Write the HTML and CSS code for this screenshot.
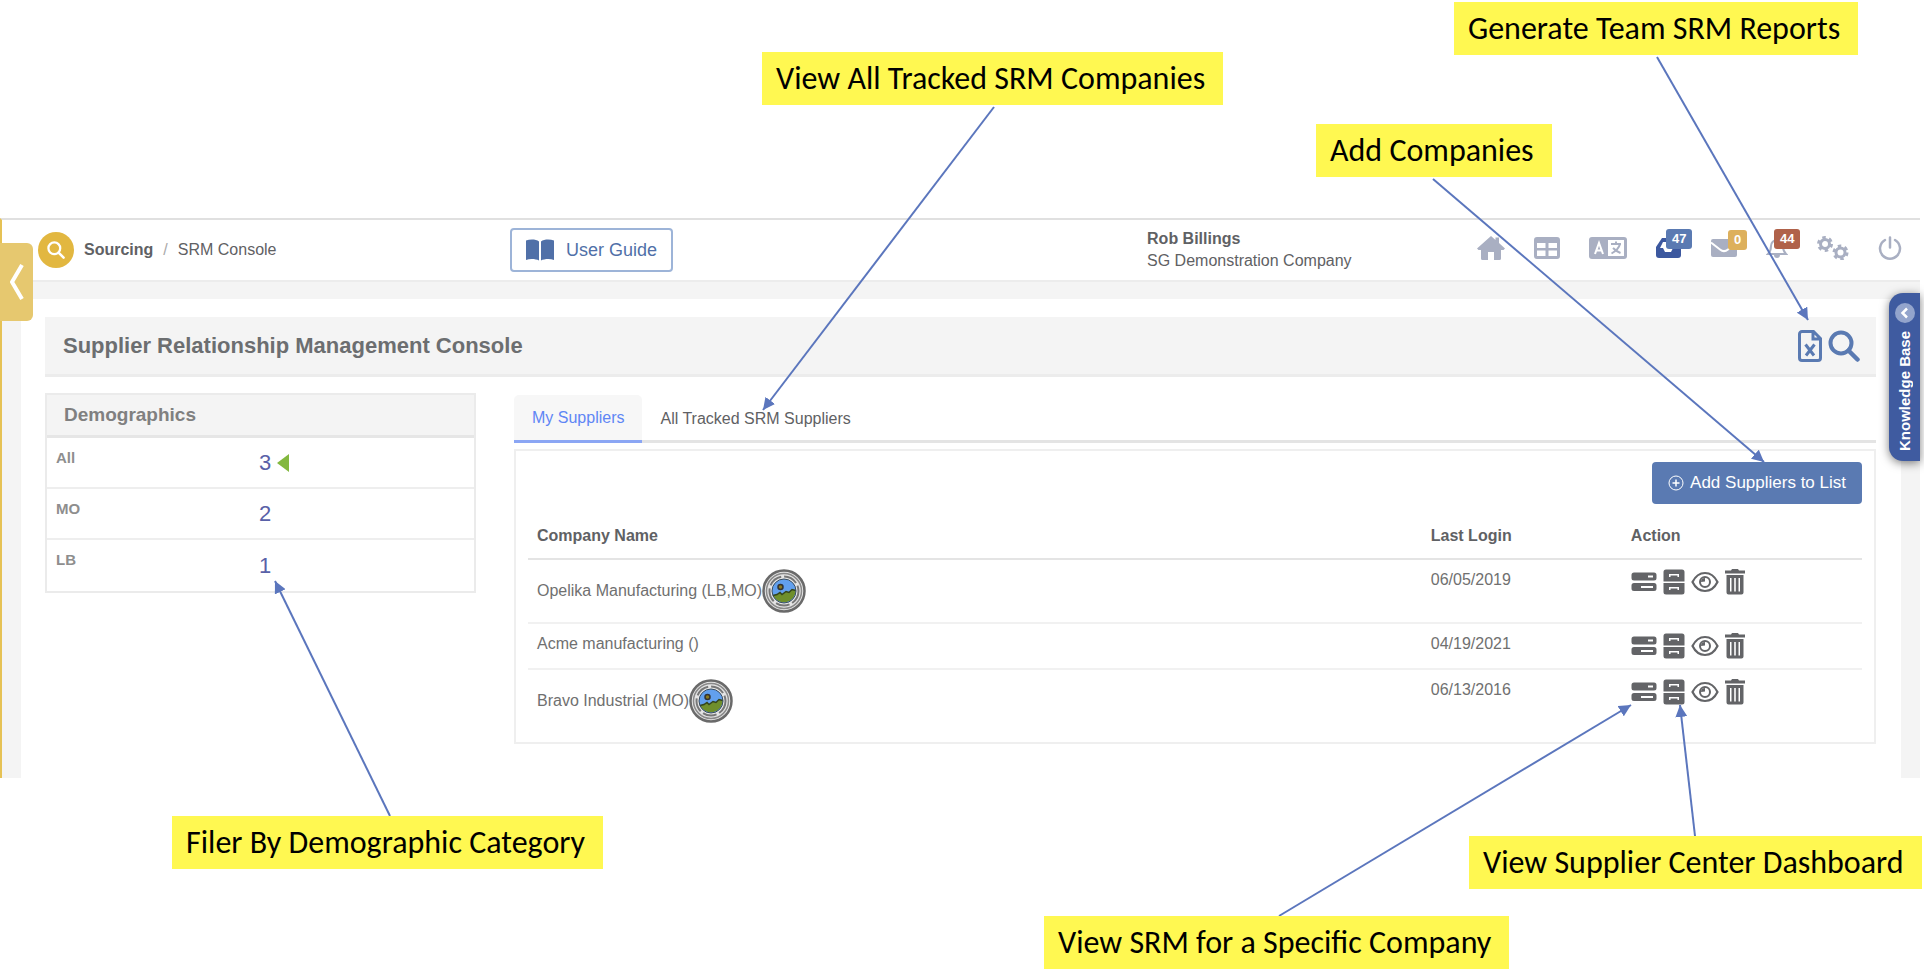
FILE: index.html
```
<!DOCTYPE html>
<html lang="en">
<head>
    <meta charset="UTF-8">
    <meta name="viewport" content="width=device-width, initial-scale=1.0">
    <title>SRM Console</title>
    <link rel="stylesheet" href="styles.css">
</head>
<body>
    <!-- Shared icons -->
    <svg class="sprite" aria-hidden="true">
        <symbol id="i-search" viewBox="0 0 32 32">
            <circle cx="13" cy="13" r="10.5" fill="none" stroke="currentColor" stroke-width="4"/>
            <path d="M20.5 20.5l9 9" fill="none" stroke="currentColor" stroke-width="4.5" stroke-linecap="round"/>
        </symbol>
        <symbol id="i-server" viewBox="0 0 26 20">
            <path fill="currentColor" fill-rule="evenodd" d="M3 .5h20a2.500 2.500 0 0 1 2.500 2.500v3a2.500 2.500 0 0 1-2.500 2.500H3A2.500 2.500 0 0 1 .5 6V3A2.500 2.500 0 0 1 3 .5zm14 3v2h5v-2zM3 11h20a2.500 2.500 0 0 1 2.500 2.500v3a2.500 2.500 0 0 1-2.500 2.500H3A2.500 2.500 0 0 1 .5 16.500v-3A2.500 2.500 0 0 1 3 11zm7 3v2h12v-2z"/>
        </symbol>
        <symbol id="i-drawer" viewBox="0 0 22 26">
            <path fill="currentColor" fill-rule="evenodd" d="M3 .5h16A2.500 2.500 0 0 1 21.500 3v9.500H.5V3A2.500 2.500 0 0 1 3 .5zM6 8h1.500V6.500h7V8H16V5H6zM.5 14h21v9a2.500 2.500 0 0 1-2.500 2.500H3A2.500 2.500 0 0 1 .5 23zM6 21h1.500v-1.500h7V21H16v-3H6z"/>
        </symbol>
        <symbol id="i-eye" viewBox="0 0 28 22">
            <path d="M1.500 11C4.500 5 9 2 14 2s9.500 3 12.500 9C23.500 17 19 20 14 20S4.500 17 1.500 11z" fill="none" stroke="currentColor" stroke-width="2.200"/>
            <circle cx="14" cy="11" r="5" fill="none" stroke="currentColor" stroke-width="2"/>
            <path d="M10 11a4 4 0 0 1 4-4v3.500z" fill="currentColor"/>
        </symbol>
        <symbol id="i-trash" viewBox="0 0 20 26">
            <path fill="currentColor" fill-rule="evenodd" d="M7 0h6l1 1.500h6v3H0v-3h6zM1.500 6h17v17.500A2 2 0 0 1 16.500 25.500h-13a2 2 0 0 1-2-2zM5 9v13.500h1.500V9zm4.200 0v13.500h1.600V9zm4.300 0v13.500H15V9z"/>
        </symbol>
        <symbol id="i-seal" viewBox="0 0 44 44">
            <circle cx="22" cy="22" r="20.500" fill="#e4e4e4" stroke="#6a6a6a" stroke-width="2.500"/>
            <circle cx="22" cy="22" r="17.500" fill="none" stroke="#8a8a8a" stroke-width="1.500"/>
            <circle cx="22" cy="22" r="14.500" fill="none" stroke="#777" stroke-width="2" stroke-dasharray="14 3"/>
            <circle cx="22" cy="22" r="12" fill="#62a0ee"/>
            <path d="M11 26.500l4-1 3-2 2 2 4-3 3 1 3-3 3.800 1A12 12 0 0 1 11 26.500z" fill="#6f8f2c"/>
            <path d="M11 26.500l4-1 3-2 2 2 4-3 3 1 3-3 3.800 1" fill="none" stroke="#35451c" stroke-width="1.500"/>
            <circle cx="22" cy="22" r="12" fill="none" stroke="#3c4e5e" stroke-width="1"/>
            <circle cx="18.500" cy="18" r="2.500" fill="#8a7a20" stroke="#333" stroke-width="1.500"/>
        </symbol>
    </svg>

    <div class="app">
        <header class="topbar">
            <button class="search-btn" aria-label="Search"><svg width="18" height="18"><use href="#i-search"/></svg></button>
            <nav class="breadcrumb">
                <a href="#" class="current">Sourcing</a>
                <span class="slash">/</span>
                <a href="#">SRM Console</a>
            </nav>
            <a href="#" class="guide-btn">
                <svg width="28" height="22" viewBox="0 0 28 22" fill="currentColor"><path d="M13 2.500C10 0 4 0 0 1.500V21c4-1.500 10-1 13 .5zM15 2.500C18 0 24 0 28 1.500V21c-4-1.500-10-1-13 .5z"/></svg>
                User Guide
            </a>
            <div class="user">
                <strong>Rob Billings</strong>
                <span>SG Demonstration Company</span>
            </div>
            <div class="toolbar">
                <button aria-label="Home"><svg width="28" height="24" viewBox="0 0 28 24" fill="currentColor"><path d="M14 0l4.500 4V1.500h3.500V7l6 5.500-1.500 1.500H24v8.500a1.500 1.500 0 0 1-1.500 1.500H17v-8h-6v8H5.500A1.500 1.500 0 0 1 4 22.500V14H1.500L0 12.500z"/></svg></button>
                <button aria-label="Tables"><svg width="26" height="22" viewBox="0 0 26 22" fill="currentColor" fill-rule="evenodd"><path d="M3 0h20a3 3 0 0 1 3 3v16a3 3 0 0 1-3 3H3a3 3 0 0 1-3-3V3a3 3 0 0 1 3-3zm0 6v5h8.500V6zm11.500 0v5H23V6zM3 13.500V19h8.500v-5.500zm11.500 0V19H23v-5.500z"/></svg></button>
                <button aria-label="Language"><svg width="38" height="22" viewBox="0 0 38 22"><rect width="38" height="22" rx="3" fill="currentColor"/><rect x="19" y="3" width="16" height="16" fill="#fff"/><path d="M6 17l4-11 4 11M7.500 13.500h5" fill="none" stroke="#fff" stroke-width="2"/><path d="M22 7h10M27 4.500V7M31 7c-1 4-4 7-8.500 9.500M24 11c2 2 5 4 7.500 5" fill="none" stroke="currentColor" stroke-width="2"/></svg></button>
                <button class="active" aria-label="Inbox"><svg width="26" height="20" viewBox="0 0 26 20"><path d="M6 0h14l5 9v8a3 3 0 0 1-3 3H3a3 3 0 0 1-3-3V9z" fill="currentColor"/><path d="M4 10l3-6h12l3 6h-5l-2 4H9l-2-4z" fill="#fff"/></svg><span class="badge">47</span></button>
                <button aria-label="Messages"><svg width="26" height="18" viewBox="0 0 26 18"><rect width="26" height="18" rx="2" fill="currentColor"/><path d="M0 3.500l9 7c2.500 2 5.500 2 8 0l9-7" fill="none" stroke="#fff" stroke-width="2"/></svg><span class="badge yellow">0</span></button>
                <button aria-label="Alerts"><svg width="22" height="20" viewBox="0 0 22 20"><path d="M2 16c2-2 3-3.500 3-8a6 6 0 0 1 12 0c0 4.500 1 6 3 8z" fill="none" stroke="currentColor" stroke-width="2"/><path d="M8 17h6a3 3 0 0 1-6 0z" fill="currentColor"/></svg><span class="badge red">44</span></button>
                <button aria-label="Settings"><svg width="32" height="24" viewBox="0 0 32 24" fill="none" stroke="currentColor"><circle cx="8" cy="8" r="4.500" stroke-width="3"/><circle cx="8" cy="8" r="6.500" stroke-width="3" stroke-dasharray="3.400 3.400"/><circle cx="23.500" cy="16.500" r="4.500" stroke-width="3"/><circle cx="23.500" cy="16.500" r="6.500" stroke-width="3" stroke-dasharray="3.400 3.400"/></svg></button>
                <button aria-label="Log out"><svg width="24" height="24" viewBox="0 0 24 24" fill="none" stroke="currentColor" stroke-width="2.500" stroke-linecap="round"><path d="M12 1.500v10M7 4a10 10 0 1 0 10 0"/></svg></button>
            </div>
        </header>

        <button class="side-toggle" aria-label="Open menu"><svg width="14" height="36" viewBox="0 0 14 36"><path d="M12 1L2 18l10 17" fill="none" stroke="#fff" stroke-width="4"/></svg></button>

        <main class="content">
            <div class="title-bar">
                <h1>Supplier Relationship Management Console</h1>
                <div class="title-actions">
                    <button aria-label="Export to Excel"><svg width="24" height="32" viewBox="0 0 24 32"><path d="M4 1.500h11.500l7 7V28a2.500 2.500 0 0 1-2.500 2.500H4A2.500 2.500 0 0 1 1.500 28V4A2.500 2.500 0 0 1 4 1.500zM15 2v7h7" fill="none" stroke="currentColor" stroke-width="3"/><path d="M7.500 14.500l8.500 11M16.500 14.500l-8.500 11" stroke="currentColor" stroke-width="3"/></svg></button>
                    <button aria-label="Search suppliers"><svg width="32" height="32"><use href="#i-search"/></svg></button>
                </div>
            </div>

            <div class="columns">
                <section class="demographics">
                    <h2>Demographics</h2>
                    <div class="demo-row"><span>All</span><a href="#">3 <svg width="12" height="18" viewBox="0 0 12 18"><path d="M12 0v18L0 9z" fill="#83b83f"/></svg></a></div>
                    <div class="demo-row"><span>MO</span><a href="#">2</a></div>
                    <div class="demo-row"><span>LB</span><a href="#">1</a></div>
                </section>

                <section class="suppliers">
                    <div class="tabs">
                        <button class="tab active">My Suppliers</button>
                        <button class="tab">All Tracked SRM Suppliers</button>
                    </div>
                    <div class="panel">
                        <button class="add-btn">
                            <svg width="16" height="16" viewBox="0 0 16 16" fill="none" stroke="currentColor"><circle cx="8" cy="8" r="7"/><path d="M8 4.500v7M4.500 8h7" stroke-width="1.500"/></svg>
                            Add Suppliers to List
                        </button>
                        <table>
                            <thead>
                                <tr><th class="col-name">Company Name</th><th class="col-date">Last Login</th><th>Action</th></tr>
                            </thead>
                            <tbody>
                                <tr>
                                    <td><div class="company">Opelika Manufacturing (LB,MO) <svg width="44" height="44"><use href="#i-seal"/></svg></div></td>
                                    <td>06/05/2019</td>
                                    <td><div class="actions">
                                        <button aria-label="View SRM"><svg width="26" height="20"><use href="#i-server"/></svg></button>
                                        <button aria-label="Dashboard"><svg width="22" height="26"><use href="#i-drawer"/></svg></button>
                                        <button aria-label="View"><svg width="28" height="22"><use href="#i-eye"/></svg></button>
                                        <button aria-label="Delete"><svg width="20" height="26"><use href="#i-trash"/></svg></button>
                                    </div></td>
                                </tr>
                                <tr>
                                    <td>Acme manufacturing ()</td>
                                    <td>04/19/2021</td>
                                    <td><div class="actions">
                                        <button aria-label="View SRM"><svg width="26" height="20"><use href="#i-server"/></svg></button>
                                        <button aria-label="Dashboard"><svg width="22" height="26"><use href="#i-drawer"/></svg></button>
                                        <button aria-label="View"><svg width="28" height="22"><use href="#i-eye"/></svg></button>
                                        <button aria-label="Delete"><svg width="20" height="26"><use href="#i-trash"/></svg></button>
                                    </div></td>
                                </tr>
                                <tr>
                                    <td><div class="company">Bravo Industrial (MO) <svg width="44" height="44"><use href="#i-seal"/></svg></div></td>
                                    <td>06/13/2016</td>
                                    <td><div class="actions">
                                        <button aria-label="View SRM"><svg width="26" height="20"><use href="#i-server"/></svg></button>
                                        <button aria-label="Dashboard"><svg width="22" height="26"><use href="#i-drawer"/></svg></button>
                                        <button aria-label="View"><svg width="28" height="22"><use href="#i-eye"/></svg></button>
                                        <button aria-label="Delete"><svg width="20" height="26"><use href="#i-trash"/></svg></button>
                                    </div></td>
                                </tr>
                            </tbody>
                        </table>
                    </div>
                </section>
            </div>
        </main>

        <button class="knowledge">
            <span>Knowledge Base</span>
            <svg width="20" height="20" viewBox="0 0 20 20"><circle cx="10" cy="10" r="10" fill="#93a4cc"/><path d="M12 5.500L7.500 10l4.500 4.500" fill="none" stroke="#fff" stroke-width="2.500"/></svg>
        </button>
    </div>

    <!-- Callouts over the console -->
    <svg class="arrows" viewBox="0 0 1924 980" aria-hidden="true">
        <defs>
            <marker id="head" markerUnits="userSpaceOnUse" markerWidth="12" markerHeight="12" refX="12" refY="6" orient="auto"><path d="M0 0l12 6-12 6z" fill="#5b76bd"/></marker>
        </defs>
        <g stroke="#5b76bd" stroke-width="2" marker-end="url(#head)">
            <line x1="994" y1="107" x2="763" y2="410"/>
            <line x1="1657" y1="57" x2="1808" y2="320"/>
            <line x1="1433" y1="179" x2="1764" y2="462"/>
            <line x1="390" y1="816" x2="275" y2="581"/>
            <line x1="1279" y1="916" x2="1631" y2="705"/>
            <line x1="1695" y1="836" x2="1680" y2="705"/>
        </g>
    </svg>
    <div class="callout c-tracked">View All Tracked SRM Companies</div>
    <div class="callout c-reports">Generate Team SRM Reports</div>
    <div class="callout c-add">Add Companies</div>
    <div class="callout c-filter">Filer By Demographic Category</div>
    <div class="callout c-dashboard">View Supplier Center Dashboard</div>
    <div class="callout c-specific">View SRM for a Specific Company</div>
</body>
</html>
```
FILE: styles.css
```
:root {
    --blue: #5a7ab2;
    --gold: #e2b740;
    --text: #5f6164;
    --gray: #f4f4f4;
    --line: #e4e4e4;
}
* {
    box-sizing: border-box;
}
body {
    margin: 0;
    padding: 218px 4px 0 0;
    position: relative;
    min-height: 980px;
    background: #fff;
    color: var(--text);
    font-family: "Liberation Sans", Arial, sans-serif;
    font-size: 16px;
    line-height: 22px;
}
a {
    color: inherit;
    text-decoration: none;
}
button {
    font: inherit;
    color: inherit;
    background: none;
    border: none;
    padding: 0;
    cursor: pointer;
}
svg {
    display: block;
    flex: none;
}
.sprite {
    position: absolute;
    width: 0;
    height: 0;
}
.app {
    position: relative;
    background: var(--gray);
    border-top: 2px solid #e0e0e0;
    border-left: 2px solid #e6c255;
}

/* Top bar */
.topbar {
    display: flex;
    align-items: center;
    height: 62px;
    padding: 0 18px 0 36px;
    background: #fff;
    border-bottom: 2px solid #ececec;
}
.search-btn {
    display: flex;
    align-items: center;
    justify-content: center;
    width: 36px;
    height: 36px;
    border-radius: 50%;
    background: var(--gold);
    color: #fff;
}
.breadcrumb {
    display: flex;
    gap: 10px;
    width: 436px;
    padding-left: 10px;
}
.breadcrumb .current {
    font-weight: bold;
}
.slash {
    color: #aaa;
}
.guide-btn {
    display: flex;
    align-items: center;
    gap: 12px;
    height: 44px;
    padding: 0 14px;
    border: 2px solid #9db4d8;
    border-radius: 4px;
    color: #5070a8;
    font-size: 18px;
}
.user {
    display: flex;
    flex-direction: column;
    flex: 1;
    padding-left: 474px;
    white-space: nowrap;
}
.toolbar {
    display: flex;
    align-items: center;
    gap: 29px;
    padding-bottom: 4px;
    color: #a9afc2;
}
.toolbar button {
    position: relative;
}
.toolbar .active {
    color: #3c589f;
}
.badge {
    position: absolute;
    top: -9px;
    left: 10px;
    padding: 0 6px;
    border-radius: 3px;
    background: var(--blue);
    color: #fff;
    font-size: 13px;
    font-weight: bold;
    line-height: 20px;
}
.badge.yellow {
    left: 17px;
    background: #ddb05c;
}
.badge.red {
    left: 8px;
    background: #b0624a;
}

/* Main content */
.content {
    margin: 17px 19px 0 19px;
    padding: 18px 25px 34px 24px;
    background: #fff;
}
.title-bar {
    display: flex;
    align-items: center;
    justify-content: space-between;
    height: 60px;
    padding: 0 16px 0 18px;
    background: var(--gray);
    border-bottom: 3px solid #ececec;
}
.title-bar h1 {
    margin: 0;
    color: #6c6e70;
    font-size: 22px;
}
.title-actions {
    display: flex;
    gap: 6px;
    color: var(--blue);
}
.columns {
    display: flex;
    align-items: flex-start;
    gap: 38px;
    margin-top: 16px;
}
.demographics {
    width: 431px;
    border: 2px solid #ebebeb;
}
.demographics h2 {
    margin: 0;
    padding: 9px 17px;
    background: var(--gray);
    border-bottom: 3px solid #e6e6e6;
    color: #808080;
    font-size: 19px;
}
.demo-row {
    display: grid;
    grid-template-columns: 203px 1fr;
    height: 51px;
    padding: 9px;
    border-bottom: 2px solid #eee;
}
.demo-row:last-child {
    border-bottom: none;
}
.demo-row span {
    color: #8e8e8e;
    font-size: 15px;
    font-weight: bold;
}
.demo-row a {
    display: flex;
    align-items: center;
    gap: 6px;
    color: #5961a8;
    font-size: 22px;
}
.suppliers {
    flex: 1;
    padding-top: 2px;
}
.tabs {
    display: flex;
    border-bottom: 3px solid var(--line);
}
.tab {
    height: 48px;
    margin-bottom: -3px;
    padding: 0 18px;
}
.tab.active {
    background: #f7f7f7;
    border-bottom: 3px solid #8ba6f4;
    border-radius: 5px 5px 0 0;
    color: #5f86f5;
}
.panel {
    margin-top: 6px;
    padding: 11px 12px 10px;
    border: 2px solid #efefef;
}
.add-btn {
    display: flex;
    align-items: center;
    gap: 6px;
    height: 42px;
    margin-left: auto;
    padding: 0 16px;
    border-radius: 4px;
    background: var(--blue);
    color: #fff;
    font-size: 17px;
}
table {
    width: 100%;
    margin-top: 10px;
    border-collapse: collapse;
}
th,
td {
    padding: 9px;
    text-align: left;
    vertical-align: top;
}
th {
    padding: 11px 9px;
    border-bottom: 2px solid var(--line);
}
td {
    border-bottom: 2px solid #f1f1f1;
    color: #707070;
}
tbody tr:last-child td {
    border-bottom: none;
}
.col-name {
    width: 67%;
}
.col-date {
    width: 15%;
}
.company {
    display: flex;
    align-items: center;
}
.actions {
    display: flex;
    align-items: center;
    gap: 6px;
    color: #636467;
}

/* Knowledge base tab */
.knowledge {
    position: absolute;
    top: 73px;
    right: 0;
    display: flex;
    flex-direction: column-reverse;
    align-items: center;
    justify-content: space-between;
    width: 31px;
    height: 168px;
    padding: 10px 4px;
    border-radius: 14px 0 0 14px;
    background: #3f5ba0;
    box-shadow: 0 2px 10px rgba(0, 0, 0, 0.5);
    color: #fff;
    font-size: 15px;
    font-weight: bold;
}
.knowledge span {
    writing-mode: vertical-rl;
    transform: rotate(180deg);
    white-space: nowrap;
}
.side-toggle {
    position: absolute;
    top: 23px;
    left: -2px;
    display: flex;
    align-items: center;
    justify-content: center;
    width: 33px;
    height: 78px;
    border-radius: 0 6px 6px 0;
    background: #e6c86f;
}

/* Callouts */
.arrows {
    position: absolute;
    top: 0;
    left: 0;
    width: 100%;
}
.callout {
    position: absolute;
    padding: 0 18px 0 14px;
    background: #fff851;
    color: #000;
    font-family: Carlito, Lato, sans-serif;
    font-size: 32px;
    line-height: 53px;
    white-space: nowrap;
}
.c-tracked {
    top: 52px;
    left: 762px;
}
.c-reports {
    top: 2px;
    left: 1454px;
}
.c-add {
    top: 124px;
    left: 1316px;
}
.c-filter {
    top: 816px;
    left: 172px;
}
.c-dashboard {
    top: 836px;
    left: 1469px;
}
.c-specific {
    top: 916px;
    left: 1044px;
}
```
